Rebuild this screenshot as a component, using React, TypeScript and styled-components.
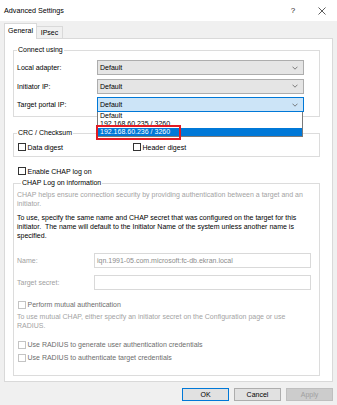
import React, { FC } from 'react'
import styled, { createGlobalStyle } from 'styled-components'

const GlobalStyle = createGlobalStyle`
  html, body {
    margin: 0;
    padding: 0;
  }
  body {
    font-family: "Liberation Sans", Arial, sans-serif;
    font-size: 7px;
    color: #000;
    background: #f0f0f0;
  }
`

const Window = styled.div`
  width: 337px;
  height: 405px;
  background: #f0f0f0;
  display: flex;
  flex-direction: column;
  overflow: hidden;
`

const TitleBar = styled.header`
  height: 21px;
  background: #fff;
  display: flex;
  align-items: center;
  padding-left: 4px;
`

const Title = styled.span`
  font-size: 7.2px;
  flex: 1;
`

const TitleButton = styled.span<{ $width: number }>`
  width: ${({ $width }) => $width}px;
  height: 21px;
  display: flex;
  align-items: center;
  justify-content: center;
  font-size: 8px;
  color: #222;
`

const TabStrip = styled.nav`
  height: 15px;
  margin-top: 2px;
  padding-left: 4px;
  display: flex;
  align-items: flex-end;
`

const Tab = styled.span<{ $active?: boolean }>`
  box-sizing: border-box;
  height: ${({ $active }) => ($active ? 16 : 12)}px;
  width: ${({ $active }) => ($active ? 33 : 26)}px;
  margin-bottom: ${({ $active }) => ($active ? -1 : 0)}px;
  border: 1px solid #d9d9d9;
  border-bottom: none;
  border-left: ${({ $active }) => ($active ? '1px solid #d9d9d9' : 'none')};
  background: ${({ $active }) => ($active ? '#fff' : '#f0f0f0')};
  position: relative;
  z-index: ${({ $active }) => ($active ? 1 : 0)};
  display: flex;
  align-items: center;
  justify-content: center;
  padding-bottom: ${({ $active }) => ($active ? 2 : 0)}px;
`

const Panel = styled.section`
  box-sizing: border-box;
  width: 329px;
  height: 344px;
  margin-left: 4px;
  background: #fff;
  border: 1px solid #d9d9d9;
  padding: 7px 12px 0 8px;
  display: flex;
  flex-direction: column;
`

const GroupBox = styled.fieldset<{ $top?: number; $pad?: string }>`
  margin: ${({ $top }) => $top ?? 0}px 0 0 0;
  padding: ${({ $pad }) => $pad ?? '6px 3px 4px 3px'};
  border: 1px solid #dcdcdc;
  min-width: 0;
  display: flex;
  flex-direction: column;
`

const Caption = styled.legend<{ $indent?: number }>`
  padding: 0 1px;
  margin-left: ${({ $indent }) => $indent ?? 0}px;
  line-height: 8px;
  font-size: 7px;
`

const ComboGrid = styled.div`
  display: grid;
  grid-template-columns: 80px 207px;
  grid-auto-rows: 15px;
  row-gap: 3.5px;
  align-items: center;
`

const Combo = styled.div<{ $focused?: boolean }>`
  position: relative;
  box-sizing: border-box;
  height: 15px;
  padding-left: 2px;
  border: 1px solid ${({ $focused }) => ($focused ? '#0078d7' : '#adadad')};
  background: ${({ $focused }) => ($focused ? '#cce4f7' : '#e5e5e5')};
  display: flex;
  align-items: center;
`

const Chevron = styled.svg`
  margin-left: auto;
  margin-right: 5px;
`

const DropList = styled.ul`
  position: absolute;
  top: calc(100% + 1px);
  left: -1px;
  width: 206px;
  box-sizing: border-box;
  margin: 0;
  padding: 0;
  list-style: none;
  background: #fff;
  border: 1px solid #7a7a7a;
  border-top: none;
  z-index: 2;
`

const DropItem = styled.li<{ $selected?: boolean }>`
  height: 8px;
  line-height: 8px;
  padding-left: 2px;
  background: ${({ $selected }) => ($selected ? '#0078d7' : 'transparent')};
  color: ${({ $selected }) => ($selected ? '#fff' : '#000')};
`

const Highlight = styled.span`
  position: absolute;
  top: 13px;
  left: -2px;
  width: 85px;
  height: 15px;
  box-sizing: border-box;
  border: 2px solid #e31b23;
  pointer-events: none;
`

const DigestRow = styled.div`
  display: grid;
  grid-template-columns: 116px auto;
`

const CheckRow = styled.label<{ $top?: number; $indent?: number; $disabled?: boolean }>`
  height: 10px;
  margin-top: ${({ $top }) => $top ?? 0}px;
  padding-left: ${({ $indent }) => $indent ?? 1}px;
  display: flex;
  align-items: center;
  gap: 1.5px;
  color: ${({ $disabled }) => ($disabled ? '#6d6d6d' : '#000')};
`

const CheckBox = styled.span<{ $disabled?: boolean }>`
  width: 8px;
  height: 8px;
  box-sizing: border-box;
  flex: none;
  background: #fff;
  border: 1px solid ${({ $disabled }) => ($disabled ? '#c4c4c4' : '#333')};
`

const Note = styled.p<{ $top?: number; $muted?: boolean }>`
  margin: ${({ $top }) => $top ?? 0}px 0 0 0;
  max-width: 288px;
  line-height: 9px;
  color: ${({ $muted }) => ($muted ? '#a3a3a3' : '#000')};
`

const FieldRow = styled.div<{ $top: number }>`
  margin-top: ${({ $top }) => $top}px;
  display: grid;
  grid-template-columns: 77px 217px;
  align-items: center;
  color: #a0a0a0;
`

const TextBox = styled.div`
  box-sizing: border-box;
  height: 15px;
  border: 1px solid #d9d9d9;
  padding-left: 2px;
  display: flex;
  align-items: center;
  color: #8c8c8c;
`

const Footer = styled.footer`
  margin-top: 6px;
  padding-right: 4px;
  display: flex;
  justify-content: flex-end;
  gap: 5px;
`

const Button = styled.button<{ $primary?: boolean; $disabled?: boolean }>`
  width: 47px;
  height: 13px;
  box-sizing: border-box;
  padding: 0;
  font-family: inherit;
  font-size: 7px;
  border: 1px solid
    ${({ $primary, $disabled }) => ($primary ? '#0078d7' : $disabled ? '#bfbfbf' : '#adadad')};
  background: ${({ $disabled }) => ($disabled ? '#cccccc' : '#e1e1e1')};
  color: ${({ $disabled }) => ($disabled ? '#a0a0a0' : '#000')};
`

const ChevronIcon: FC = () => (
  <Chevron width="6" height="4" viewBox="0 0 6 4">
    <path d="M0.5 0.7 L3 3.2 L5.5 0.7" fill="none" stroke="#606060" strokeWidth="0.8" />
  </Chevron>
)

interface ComboBoxProps {
  label: string
  focused?: boolean
  children?: React.ReactNode
}

const ComboBox: FC<ComboBoxProps> = ({ label, focused, children }) => (
  <>
    <span>{label}</span>
    <Combo $focused={focused}>
      Default
      <ChevronIcon />
      {children}
    </Combo>
  </>
)

interface CheckProps {
  text: string
  top?: number
  indent?: number
  disabled?: boolean
}

const Check: FC<CheckProps> = ({ text, top, indent, disabled }) => (
  <CheckRow $top={top} $indent={indent} $disabled={disabled}>
    <CheckBox $disabled={disabled} />
    {text}
  </CheckRow>
)

const portals = ['Default', '192.168.60.235 / 3260', '192.168.60.236 / 3260']

export default function App() {
  return (
    <Window>
      <GlobalStyle />
      <TitleBar>
        <Title>Advanced Settings</Title>
        <TitleButton $width={28}>?</TitleButton>
        <TitleButton $width={30}>
          <svg width="8" height="8" viewBox="0 0 8 8">
            <path d="M0.5 0.5 L7.5 7.5 M7.5 0.5 L0.5 7.5" stroke="#333" strokeWidth="0.8" />
          </svg>
        </TitleButton>
      </TitleBar>

      <TabStrip>
        <Tab $active>General</Tab>
        <Tab>IPsec</Tab>
      </TabStrip>

      <Panel>
        <GroupBox>
          <Caption>Connect using</Caption>
          <ComboGrid>
            <ComboBox label="Local adapter:" />
            <ComboBox label="Initiator IP:" />
            <ComboBox label="Target portal IP:" focused>
              <DropList>
                {portals.map((p, i) => (
                  <DropItem key={p} $selected={i === portals.length - 1}>
                    {p}
                  </DropItem>
                ))}
                <Highlight />
              </DropList>
            </ComboBox>
          </ComboGrid>
        </GroupBox>

        <GroupBox $top={12} $pad="5px 3px 4px 3px">
          <Caption>CRC / Checksum</Caption>
          <DigestRow>
            <Check text="Data digest" />
            <Check text="Header digest" indent={0} />
          </DigestRow>
        </GroupBox>

        <Check text="Enable CHAP log on" top={9} indent={5} />

        <GroupBox $top={3} $pad="2.5px 3px 12px 3px">
          <Caption $indent={4}>CHAP Log on information</Caption>
          <Note $muted>
            CHAP helps ensure connection security by providing authentication between a target and
            an initiator.
          </Note>
          <Note $top={5.5}>
            To use, specify the same name and CHAP secret that was configured on the target for this
            initiator.&nbsp; The name will default to the Initiator Name of the system unless another
            name is specified.
          </Note>
          <FieldRow $top={12.5}>
            <span>Name:</span>
            <TextBox>iqn.1991-05.com.microsoft:fc-db.ekran.local</TextBox>
          </FieldRow>
          <FieldRow $top={7}>
            <span>Target secret:</span>
            <TextBox />
          </FieldRow>
          <Check text="Perform mutual authentication" top={10} disabled />
          <Note $top={2.5} $muted>
            To use mutual CHAP, either specify an initiator secret on the Configuration page or use
            RADIUS.
          </Note>
          <Check text="Use RADIUS to generate user authentication credentials" top={9.5} disabled />
          <Check text="Use RADIUS to authenticate target credentials" top={3} disabled />
        </GroupBox>
      </Panel>

      <Footer>
        <Button $primary>OK</Button>
        <Button>Cancel</Button>
        <Button $disabled>Apply</Button>
      </Footer>
    </Window>
  )
}
